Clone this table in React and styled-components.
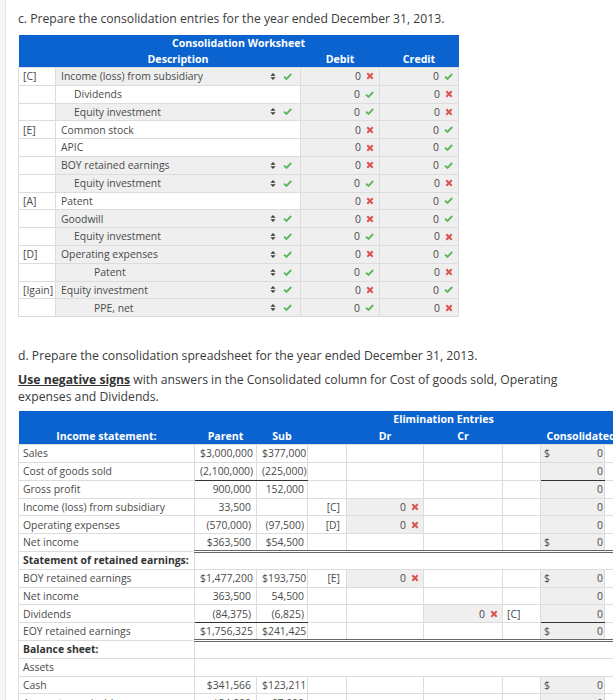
import styled, { createGlobalStyle } from 'styled-components';

const Global = createGlobalStyle`
  html, body {
    margin: 0;
    padding: 0;
    background: #f4f5f7;
    overflow: hidden;
  }
  body {
    font-family: "Open Sans", "Liberation Sans", sans-serif;
    color: #444;
  }
`;

const Page = styled.div`
  margin-left: 5px;
  min-height: 700px;
  background: #fff;
  border-left: 1px solid #e2e4e8;
  padding: 10px 0 0 12px;
  overflow: hidden;
`;

const Para = styled.p`
  margin: 0 0 ${({ gap }) => gap}px;
  font-size: 12.2px;
  line-height: 17px;
  color: #3a3a3a;
`;

const Strong = styled.span`
  font-weight: 700;
  text-decoration: underline;
  color: #333;
`;

const Table = styled.table`
  border-collapse: collapse;
  table-layout: fixed;
  width: ${({ w }) => w}px;
  font-size: 10.4px;
  margin-bottom: ${({ gap }) => gap || 0}px;
`;

const HeadCell = styled.th`
  background: #0b63cf;
  color: #fff;
  font-weight: 700;
  font-size: 10.6px;
  height: ${({ h }) => h}px;
  padding: 0;
  text-align: ${({ align }) => align || 'center'};
  padding-left: ${({ pl }) => pl || 0}px;
  line-height: 1;
  vertical-align: middle;
  white-space: nowrap;
  overflow: hidden;
`;

const Row = styled.tr`
  height: 17.8px;
`;

const Cell = styled.td`
  border: 1px solid #dcdcdc;
  background: ${({ shade }) => (shade ? '#efefef' : '#fff')};
  padding: 0 ${({ pr }) => (pr == null ? 5 : pr)}px 0 ${({ pl }) => (pl == null ? 5 : pl)}px;
  text-align: ${({ align }) => align || 'left'};
  font-weight: ${({ bold }) => (bold ? 700 : 400)};
  color: ${({ bold }) => (bold ? '#333' : '#4a4a4a')};
  white-space: nowrap;
  overflow: hidden;
  line-height: 1;
  border-bottom: ${({ under }) =>
    under === 'double' ? '3px double #666' : under === 'single' ? '1px solid #333' : '1px solid #dcdcdc'};
`;

const Inner = styled.div`
  display: flex;
  align-items: center;
  justify-content: ${({ justify }) => justify || 'flex-start'};
  gap: ${({ gap }) => (gap == null ? 4 : gap)}px;
`;

const Label = styled.span`
  flex: 1;
  padding-left: ${({ indent }) => indent}px;
`;

const IconBox = styled.span`
  display: inline-flex;
  width: ${({ w }) => w}px;
  justify-content: center;
`;

function SortIcon() {
  return (
    <svg width="6" height="9" viewBox="0 0 6 9">
      <path d="M0.4 3.8 L3 1 L5.6 3.8Z M0.4 5.2 L3 8 L5.6 5.2Z" fill="#3c3c3c" />
    </svg>
  );
}

function CheckIcon() {
  return (
    <svg width="9" height="7" viewBox="0 0 9 7">
      <path d="M1 3.6 L3.5 5.9 L8.2 1" stroke="#5cb85c" strokeWidth="1.9" fill="none" />
    </svg>
  );
}

function CrossIcon() {
  return (
    <svg width="8" height="8" viewBox="0 0 8 8">
      <path d="M1.3 1.3 L6.7 6.7 M6.7 1.3 L1.3 6.7" stroke="#d9534f" strokeWidth="2" fill="none" />
    </svg>
  );
}

const Mark = ({ ok }) => (ok ? <CheckIcon /> : <CrossIcon />);

const entries = [
  { tag: '[C]', desc: 'Income (loss) from subsidiary', sel: true, indent: 0, dr: false, cr: true },
  { tag: '', desc: 'Dividends', sel: false, indent: 13, dr: true, cr: false },
  { tag: '', desc: 'Equity investment', sel: true, indent: 13, dr: true, cr: false },
  { tag: '[E]', desc: 'Common stock', sel: false, indent: 0, dr: false, cr: true },
  { tag: '', desc: 'APIC', sel: false, indent: 0, dr: false, cr: true },
  { tag: '', desc: 'BOY retained earnings', sel: true, indent: 0, dr: false, cr: true },
  { tag: '', desc: 'Equity investment', sel: true, indent: 13, dr: true, cr: false },
  { tag: '[A]', desc: 'Patent', sel: false, indent: 0, dr: false, cr: true },
  { tag: '', desc: 'Goodwill', sel: true, indent: 0, dr: false, cr: true },
  { tag: '', desc: 'Equity investment', sel: true, indent: 13, dr: true, cr: false },
  { tag: '[D]', desc: 'Operating expenses', sel: true, indent: 0, dr: false, cr: true },
  { tag: '', desc: 'Patent', sel: true, indent: 33, dr: true, cr: false },
  { tag: '[Igain]', desc: 'Equity investment', sel: true, indent: 0, dr: false, cr: true },
  { tag: '', desc: 'PPE, net', sel: true, indent: 33, dr: true, cr: false },
];

function AmountCell({ ok }) {
  return (
    <Cell shade align="right" pr={5}>
      <Inner justify="flex-end" gap={5}>
        <span>0</span>
        <Mark ok={ok} />
      </Inner>
    </Cell>
  );
}

function EntriesTable() {
  return (
    <Table w={440} gap={30}>
      <colgroup>
        <col style={{ width: 37 }} />
        <col style={{ width: 245 }} />
        <col style={{ width: 79 }} />
        <col style={{ width: 79 }} />
      </colgroup>
      <thead>
        <tr>
          <HeadCell h={16} colSpan={4}>Consolidation Worksheet</HeadCell>
        </tr>
        <tr>
          <HeadCell h={16} />
          <HeadCell h={16}>Description</HeadCell>
          <HeadCell h={16}>Debit</HeadCell>
          <HeadCell h={16}>Credit</HeadCell>
        </tr>
      </thead>
      <tbody>
        {entries.map((e, i) => (
          <Row key={i}>
            <Cell pl={4}>{e.tag}</Cell>
            <Cell shade={e.sel} pr={4}>
              <Inner gap={0}>
                <Label indent={e.indent}>{e.desc}</Label>
                {e.sel && (
                  <>
                    <IconBox w={10}><SortIcon /></IconBox>
                    <IconBox w={18}><CheckIcon /></IconBox>
                  </>
                )}
              </Inner>
            </Cell>
            <AmountCell ok={e.dr} />
            <AmountCell ok={e.cr} />
          </Row>
        ))}
      </tbody>
    </Table>
  );
}

const sheet = [
  { label: 'Sales', parent: '$3,000,000', sub: '$377,000', dollar: true },
  { label: 'Cost of goods sold', parent: '(2,100,000)', sub: '(225,000)', line: 'single' },
  { label: 'Gross profit', parent: '900,000', sub: '152,000' },
  { label: 'Income (loss) from subsidiary', parent: '33,500', sub: '', drTag: '[C]', dr: true },
  { label: 'Operating expenses', parent: '(570,000)', sub: '(97,500)', drTag: '[D]', dr: true },
  { label: 'Net income', parent: '$363,500', sub: '$54,500', dollar: true, line: 'double' },
  { label: 'Statement of retained earnings:', heading: true },
  { label: 'BOY retained earnings', parent: '$1,477,200', sub: '$193,750', drTag: '[E]', dr: true, dollar: true },
  { label: 'Net income', parent: '363,500', sub: '54,500' },
  { label: 'Dividends', parent: '(84,375)', sub: '(6,825)', cr: true, crTag: '[C]', line: 'single' },
  { label: 'EOY retained earnings', parent: '$1,756,325', sub: '$241,425', dollar: true, line: 'double' },
  { label: 'Balance sheet:', heading: true },
  { label: 'Assets', blank: true },
  { label: 'Cash', parent: '$341,566', sub: '$123,211', dollar: true },
  { label: 'Accounts receivable', parent: '$84,000', sub: '67,000' },
];

function EntryValue() {
  return (
    <Inner justify="flex-end" gap={5}>
      <span>0</span>
      <CrossIcon />
    </Inner>
  );
}

function SheetRow({ r }) {
  if (r.heading || r.blank) {
    return (
      <Row>
        <Cell bold={r.heading} pl={4}>{r.label}</Cell>
        <Cell colSpan={8} />
      </Row>
    );
  }
  const dbl = r.line === 'double' ? 'double' : null;
  const num = r.line === 'single' ? 'single' : dbl;
  return (
    <Row>
      <Cell pl={4}>{r.label}</Cell>
      <Cell align="right" pr={5} under={num}>{r.parent}</Cell>
      <Cell align="right" pr={3} under={num}>{r.sub}</Cell>
      <Cell align="right" pr={6} under={dbl}>{r.drTag}</Cell>
      <Cell shade={r.dr} align="right" pr={4} under={dbl}>{r.dr && <EntryValue />}</Cell>
      <Cell shade={r.cr} align="right" pr={4} under={dbl}>{r.cr && <EntryValue />}</Cell>
      <Cell pl={4} under={dbl}>{r.crTag}</Cell>
      <Cell shade pl={3} pr={1} under={num}>
        <Inner justify={r.dollar ? 'space-between' : 'flex-end'}>
          {r.dollar && <span>$</span>}
          <span>0</span>
        </Inner>
      </Cell>
      <Cell under={dbl} />
    </Row>
  );
}

function SpreadsheetTable() {
  return (
    <Table w={613}>
      <colgroup>
        <col style={{ width: 176 }} />
        <col style={{ width: 62 }} />
        <col style={{ width: 51 }} />
        <col style={{ width: 39 }} />
        <col style={{ width: 77 }} />
        <col style={{ width: 79 }} />
        <col style={{ width: 38 }} />
        <col style={{ width: 64 }} />
        <col style={{ width: 27 }} />
      </colgroup>
      <thead>
        <tr>
          <HeadCell h={16.5} colSpan={4} />
          <HeadCell h={16.5} colSpan={3}>Elimination Entries</HeadCell>
          <HeadCell h={16.5} colSpan={2} />
        </tr>
        <tr>
          <HeadCell h={16.5}>Income statement:</HeadCell>
          <HeadCell h={16.5}>Parent</HeadCell>
          <HeadCell h={16.5}>Sub</HeadCell>
          <HeadCell h={16.5} />
          <HeadCell h={16.5}>Dr</HeadCell>
          <HeadCell h={16.5}>Cr</HeadCell>
          <HeadCell h={16.5} />
          <HeadCell h={16.5} colSpan={2} align="left" pl={6}>Consolidated</HeadCell>
        </tr>
      </thead>
      <tbody>
        {sheet.map((r, i) => (
          <SheetRow key={i} r={r} />
        ))}
      </tbody>
    </Table>
  );
}

export default function App() {
  return (
    <>
      <Global />
      <Page>
        <Para gap={8}>c. Prepare the consolidation entries for the year ended December 31, 2013.</Para>
        <EntriesTable />
        <Para gap={7}>d. Prepare the consolidation spreadsheet for the year ended December 31, 2013.</Para>
        <Para gap={6}>
          <Strong>Use negative signs</Strong> with answers in the Consolidated column for Cost of goods sold, Operating
          expenses and Dividends.
        </Para>
        <SpreadsheetTable />
      </Page>
    </>
  );
}
